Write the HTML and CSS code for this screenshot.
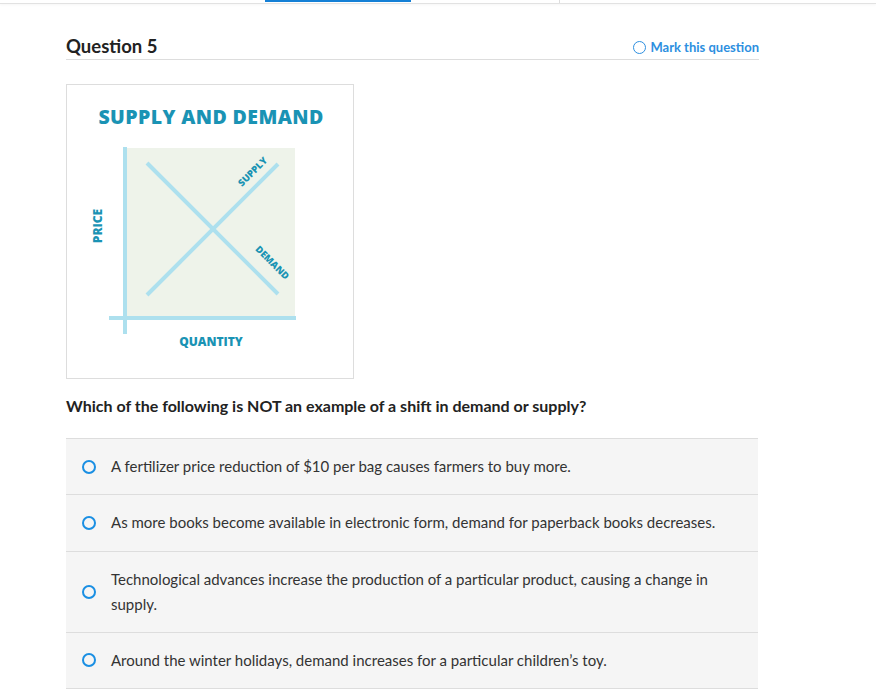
FILE: index.html
```html
<!DOCTYPE html>
<html>
<head>
<meta charset="utf-8">
<link rel="stylesheet" href="styles.css">
</head>
<body>
<div class="topbar">
  <div class="tab-active"></div>
  <div class="tab-sep"></div>
</div>
<main class="question">
  <header class="q-header">
    <h2 class="q-title">Question 5</h2>
    <a class="mark"><span class="mark-circle"></span>Mark this question</a>
  </header>
  <figure class="figure">
    <svg width="287" height="294" viewBox="0 0 287 294" xmlns="http://www.w3.org/2000/svg">
      <text x="144" y="39" text-anchor="middle" class="svg-title">SUPPLY AND DEMAND</text>
      <rect x="59" y="63" width="169" height="169" fill="#eef3ea"/>
      <line x1="58" y1="62" x2="58" y2="249" stroke="#ade0ee" stroke-width="4"/>
      <line x1="42" y1="233" x2="229" y2="233" stroke="#ade0ee" stroke-width="4"/>
      <line x1="80" y1="78" x2="211" y2="209" stroke="#ade0ee" stroke-width="4"/>
      <line x1="80" y1="210" x2="211" y2="79" stroke="#ade0ee" stroke-width="4"/>
      <text class="svg-label" transform="translate(35 141) rotate(-90)" text-anchor="middle">PRICE</text>
      <text class="svg-label" x="144" y="261" text-anchor="middle">QUANTITY</text>
      <text class="svg-small" transform="translate(188 89) rotate(-45)" text-anchor="middle">SUPPLY</text>
      <text class="svg-small" transform="translate(203 180) rotate(45)" text-anchor="middle">DEMAND</text>
    </svg>
  </figure>
  <p class="prompt">Which of the following is NOT an example of a shift in demand or supply?</p>
  <ul class="options">
    <li class="option"><span class="radio"></span><span class="opt-text">A fertilizer price reduction of $10 per bag causes farmers to buy more.</span></li>
    <li class="option"><span class="radio"></span><span class="opt-text">As more books become available in electronic form, demand for paperback books decreases.</span></li>
    <li class="option"><span class="radio"></span><span class="opt-text">Technological advances increase the production of a particular product, causing a change in supply.</span></li>
    <li class="option"><span class="radio"></span><span class="opt-text">Around the winter holidays, demand increases for a particular children’s toy.</span></li>
  </ul>
</main>
</body>
</html>
```
FILE: styles.css
```css
* { box-sizing: border-box; }
body {
  margin: 0;
  background: #fff;
  font-family: Lato, "Open Sans", sans-serif;
  color: #222;
}
.topbar {
  position: relative;
  height: 4px;
  border-bottom: 1px solid #e2e2e2;
  box-shadow: 0 1px 3px rgba(0,0,0,0.04);
}
.tab-active {
  position: absolute;
  left: 265px;
  top: 0;
  width: 146px;
  height: 2px;
  background: #1580d6;
}
.tab-sep {
  position: absolute;
  left: 559px;
  top: 0;
  width: 1px;
  height: 3px;
  background: #ddd;
}
.question {
  margin-left: 66px;
  width: 693px;
  padding-top: 31px;
}
.q-header {
  display: flex;
  justify-content: space-between;
  align-items: flex-end;
  border-bottom: 1px solid #ddd;
  padding-bottom: 2px;
}
.q-title {
  margin: 0;
  font-size: 18.5px;
  font-weight: 700;
  color: #222;
  line-height: 22px;
}
.mark {
  display: flex;
  align-items: center;
  gap: 4px;
  font-size: 13px;
  font-weight: 700;
  color: #2d8fe0;
  line-height: 18px;
  margin-bottom: 1px;
}
.mark-circle {
  width: 13px;
  height: 13px;
  border: 1.5px solid #2d8fe0;
  border-radius: 50%;
}
.figure {
  margin: 24px 0 0 0;
  width: 288px;
  height: 295px;
  border: 1px solid #ddd;
}
.figure svg { display: block; }
.svg-title {
  font-family: "Open Sans", Lato, sans-serif;
  font-weight: 800;
  font-size: 19.5px;
  fill: #1a93b4;
  letter-spacing: 0.4px;
}
.svg-label {
  font-family: "Open Sans", sans-serif;
  font-weight: 800;
  font-size: 12px;
  fill: #1a93b4;
}
.svg-small {
  font-family: "Open Sans", sans-serif;
  font-weight: 800;
  font-size: 9.5px;
  fill: #1a93b4;
}
.prompt {
  margin: 17px 0 0 0;
  font-size: 16px;
  font-weight: 700;
  color: #222;
  line-height: 20px;
}
.options {
  list-style: none;
  margin: 22px 0 0 0;
  padding: 0;
  width: 692px;
  border-bottom: 1px solid #ddd;
}
.option {
  display: flex;
  align-items: center;
  background: #f5f5f5;
  border-top: 1px solid #ddd;
  padding: 15px 20px 15.25px 16px;
  min-height: 56px;
}
.radio {
  flex: none;
  width: 14px;
  height: 14px;
  border: 2px solid #1a8fe3;
  border-radius: 50%;
  margin-right: 15px;
}
.opt-text {
  font-size: 15px;
  color: #333;
  line-height: 25px;
}
```
